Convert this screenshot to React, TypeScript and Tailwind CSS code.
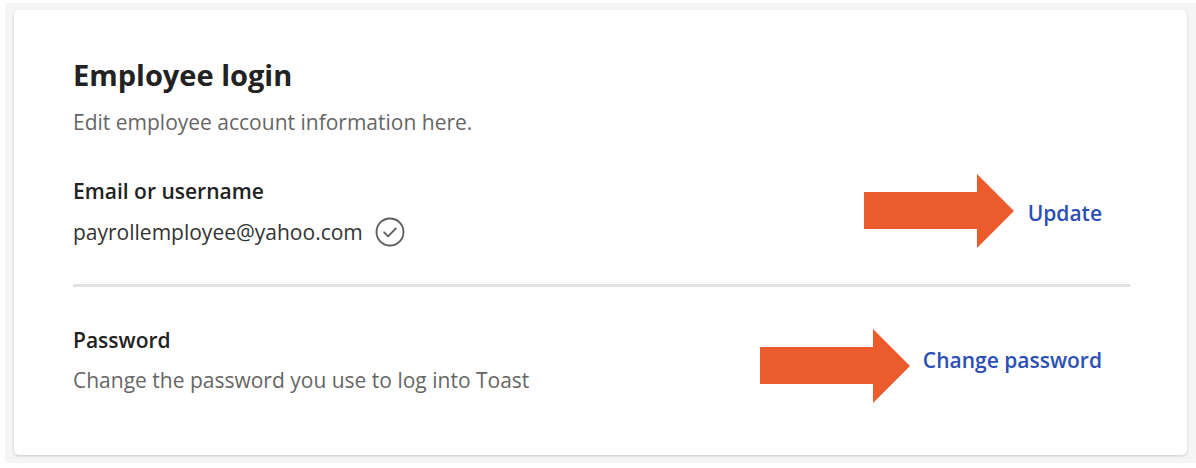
import React from "react";

const font = { fontFamily: "'Open Sans', Lato, sans-serif" };

function CheckCircle() {
  return (
    <svg width="30" height="30" viewBox="0 0 30 30" fill="none" className="ml-[12px]">
      <circle cx="15" cy="15" r="13.5" stroke="#5c5c5c" strokeWidth="1.8" />
      <path d="M9.2 15.4l3.9 3.9 7.7-8" stroke="#5c5c5c" strokeWidth="1.8" strokeLinecap="round" strokeLinejoin="round" />
    </svg>
  );
}

function Arrow({ className }: { className: string }) {
  return (
    <svg width="151" height="74" viewBox="0 0 151 74" className={`absolute ${className}`}>
      <polygon points="0,18 113,18 113,0 150,37 113,74 113,55 0,55" fill="#eb5b2b" />
    </svg>
  );
}

export default function App() {
  return (
    <div className="w-[1196px] h-[468px] bg-white pt-[3px] pl-[5px]" style={font}>
      <div className="h-[460px] bg-[#f5f5f5] pt-[7px] pl-[9px] pr-[9px]">
        <div className="relative h-[445px] rounded-[5px] bg-white shadow-[0_1px_3px_rgba(0,0,0,0.18)] pl-[59px] pr-[57px] pt-[47px]">
          <h1 className="text-[29px] leading-[36px] font-bold text-[#222]">Employee login</h1>
          <p className="mt-[16px] text-[21px] leading-[26px] text-[#666]">Edit employee account information here.</p>

          <div className="mt-[44px] flex items-center justify-between pb-[37px]">
            <div>
              <div className="text-[21px] leading-[24px] font-semibold text-[#222]">Email or username</div>
              <div className="mt-[14px] flex items-center text-[21px] leading-[24px] text-[#333]">
                payrollemployee@yahoo.com
                <CheckCircle />
              </div>
            </div>
            <a className="mr-[28px] text-[21px] leading-[24px] font-semibold text-[#2c4fb5]">Update</a>
          </div>

          <div className="h-[3px] bg-[#e2e2e2]" />

          <div className="mt-[41px] flex items-center justify-between">
            <div>
              <div className="text-[21px] leading-[24px] font-semibold text-[#222]">Password</div>
              <div className="mt-[16px] text-[21px] leading-[24px] text-[#666]">
                Change the password you use to log into Toast
              </div>
            </div>
            <a className="mr-[28px] text-[21px] leading-[24px] font-semibold text-[#2c4fb5]">Change password</a>
          </div>

          <Arrow className="left-[850px] top-[164px]" />
          <Arrow className="left-[746px] top-[319px]" />
        </div>
      </div>
    </div>
  );
}
